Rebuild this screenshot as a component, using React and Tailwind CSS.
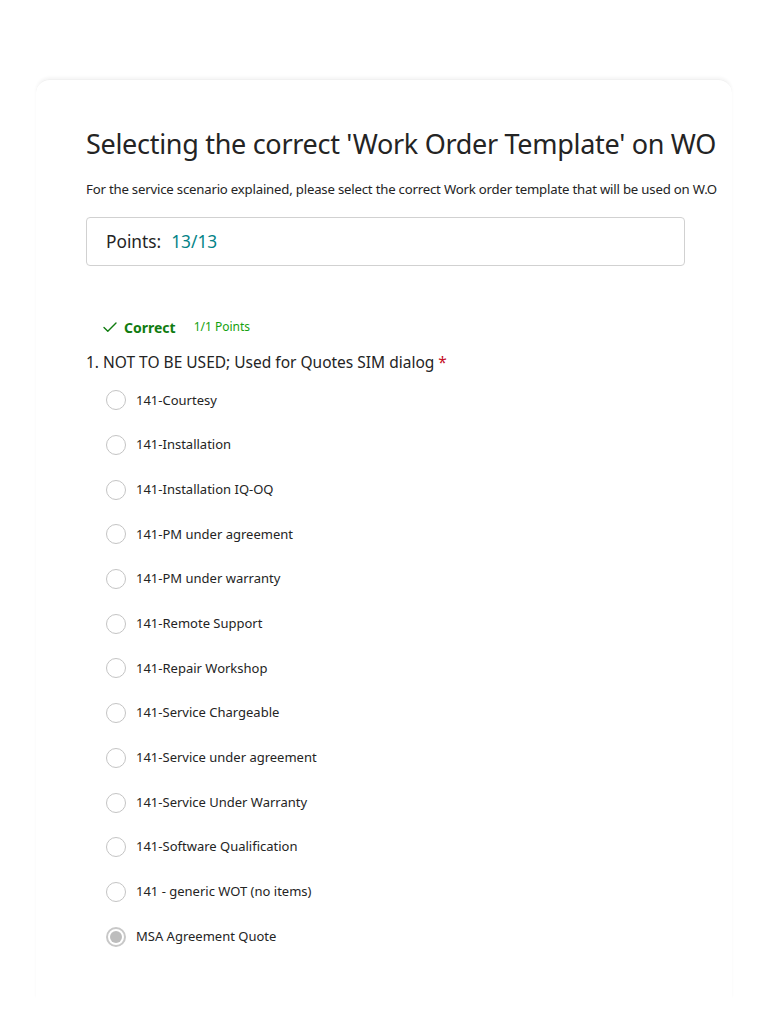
import React from "react";

const options = [
  "141-Courtesy",
  "141-Installation",
  "141-Installation IQ-OQ",
  "141-PM under agreement",
  "141-PM under warranty",
  "141-Remote Support",
  "141-Repair Workshop",
  "141-Service Chargeable",
  "141-Service under agreement",
  "141-Service Under Warranty",
  "141-Software Qualification",
  "141 - generic WOT (no items)",
  "MSA Agreement Quote",
];

export default function App() {
  return (
    <div className="min-h-[1024px] bg-white pt-[79px] px-[36px]" style={{ fontFamily: '"Noto Sans", "Open Sans", sans-serif' }}>
      <div className="w-[696px] rounded-t-[14px] border-t border-[#f1f1f1] shadow-[0_-2px_3px_rgba(0,0,0,0.04)] pl-[50px] pr-[14px] pt-[47px] pb-[40px]">
        <h1 className="text-[27px] leading-[34px] font-normal text-[#242424] tracking-[-0.3px] whitespace-nowrap">
          Selecting the correct 'Work Order Template' on WO
        </h1>
        <p className="mt-[19px] text-[13.2px] leading-[18px] text-[#242424] whitespace-nowrap tracking-[-0.2px]">
          For the service scenario explained, please select the correct Work order template that will be used on W.O
        </p>
        <div className="mt-[19px] w-[599px] h-[49px] border border-[#d1d1d1] rounded-[4px] flex items-center pl-[19px] text-[17.3px] text-[#242424]">
          <span>Points:</span>
          <span className="ml-[10px] text-[#038387]">13/13</span>
        </div>
        <div className="mt-[51px] pl-[16px] flex items-center h-[20px]">
          <svg width="16" height="16" viewBox="0 0 16 16" fill="none" className="mr-[6px]">
            <path d="M2 8.6 L5.8 12.2 L14 4" stroke="#107c10" strokeWidth="1.4" strokeLinecap="round" strokeLinejoin="round" />
          </svg>
          <span className="text-[14px] font-bold text-[#107c10]">Correct</span>
          <span className="ml-[18px] text-[12px] text-[#13a10e]">1/1 Points</span>
        </div>
        <div className="mt-[13px] text-[15.5px] leading-[24px] text-[#242424] whitespace-nowrap">
          1. NOT TO BE USED; Used for Quotes SIM dialog <span className="text-[#c50f1f]">*</span>
        </div>
        <div className="mt-[4px] flex flex-col">
          {options.map((o, i) => {
            const sel = i === options.length - 1;
            return (
              <div key={o} className="h-[44.7px] flex items-center pl-[20px]">
                <span
                  className={
                    sel
                      ? "w-[20px] h-[20px] rounded-full border-2 border-[#c8c8c8] flex items-center justify-center"
                      : "w-[20px] h-[20px] rounded-full border border-[#c4c4c4]"
                  }
                >
                  {sel && <span className="w-[12px] h-[12px] rounded-full bg-[#bdbdbd]" />}
                </span>
                <span className="ml-[10px] text-[13px] text-[#242424]">{o}</span>
              </div>
            );
          })}
        </div>
      </div>
    </div>
  );
}
